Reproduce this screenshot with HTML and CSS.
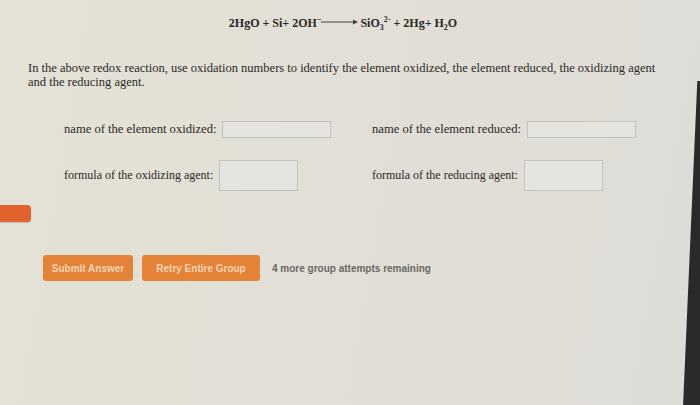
FILE: index.html
```html
<!DOCTYPE html>
<html>
<head>
<meta charset="utf-8">
<link rel="stylesheet" href="styles.css">
</head>
<body>
<div class="page">
  <div class="equation"><span class="eq">2HgO + Si+ 2OH<sup>&minus;</sup><svg class="arrow" width="38" height="8" viewBox="0 0 38 8"><line x1="0" y1="4" x2="35" y2="4" stroke="#444" stroke-width="1"/><path d="M32 1.5 L37 4 L32 6.5 Z" fill="#444"/></svg>SiO<sub>3</sub><sup>2-</sup> + 2Hg+ H<sub>2</sub>O</span></div>
  <p class="intro">In the above redox reaction, use oxidation numbers to identify the element oxidized, the element reduced, the oxidizing agent and the reducing agent.</p>
  <div class="grid">
    <div class="field"><span class="label">name of the element oxidized:</span><span class="box wide"></span></div>
    <div class="field"><span class="label">name of the element reduced:</span><span class="box wide"></span></div>
    <div class="field tall"><span class="label">formula of the oxidizing agent:</span><span class="box square"></span></div>
    <div class="field tall"><span class="label">formula of the reducing agent:</span><span class="box square"></span></div>
  </div>
  <div class="tab"></div>
  <div class="actions">
    <button class="btn submit">Submit Answer</button>
    <button class="btn retry">Retry Entire Group</button>
    <span class="remaining">4 more group attempts remaining</span>
  </div>
  <div class="edge"></div>
</div>
</body>
</html>
```
FILE: styles.css
```css
html, body {
  margin: 0;
  padding: 0;
}
body {
  width: 700px;
  height: 405px;
  overflow: hidden;
  background: linear-gradient(100deg, #e4e1d6 0%, #e2dfd6 45%, #dedcd7 100%);
  font-family: "Liberation Serif", "Times New Roman", serif;
  color: #2b2a28;
}
.page {
  position: relative;
  height: 405px;
  padding-top: 15px;
  box-sizing: border-box;
}
.equation {
  text-align: center;
  font-weight: bold;
  font-size: 12px;
  line-height: 16px;
  padding-right: 14px;
}
.eq {
  display: inline-block;
  white-space: nowrap;
}
.equation sup {
  font-size: 8px;
  vertical-align: 5px;
  line-height: 0;
}
.equation sub {
  font-size: 8px;
  vertical-align: -3px;
  line-height: 0;
}
.arrow {
  vertical-align: 1px;
  margin-right: 1px;
}
.intro {
  margin: 30px 0 0 28px;
  width: 640px;
  font-size: 12.5px;
  line-height: 14px;
}
.grid {
  display: grid;
  grid-template-columns: 308px 300px;
  margin: 31px 0 0 64px;
  row-gap: 21px;
}
.field {
  display: flex;
  align-items: center;
  height: 18px;
  font-size: 12.6px;
}
.field.tall {
  height: 32px;
  font-size: 12px;
}
.label {
  margin-right: 6px;
}
.box {
  display: block;
  background: #e6e4de;
  border: 1px solid #c4c2bc;
  box-sizing: border-box;
}
.box.wide {
  width: 109px;
  height: 17px;
}
.box.square {
  width: 79px;
  height: 31px;
}
.tab {
  margin-top: 14px;
  width: 31px;
  height: 17px;
  background: #e1622d;
  border-radius: 0 4px 4px 0;
  box-shadow: 0 1px 1px rgba(0,0,0,0.15);
}
.actions {
  display: flex;
  align-items: center;
  margin: 33px 0 0 43px;
  gap: 9px;
}
.btn {
  height: 26px;
  border: none;
  border-radius: 3px;
  background: #e48338;
  color: #f5d3b3;
  font-family: "Liberation Sans", Arial, sans-serif;
  font-weight: bold;
  font-size: 10px;
  padding: 0;
}
.btn.submit {
  width: 90px;
}
.btn.retry {
  width: 118px;
}
.remaining {
  margin-left: 3px;
  font-family: "Liberation Sans", Arial, sans-serif;
  font-weight: bold;
  font-size: 10px;
  color: #6a6864;
}
.edge {
  position: absolute;
  top: 0;
  right: 0;
  width: 18px;
  height: 405px;
  background: #2a2a2c;
  clip-path: polygon(100% 20%, 100% 100%, 6% 100%, 85% 20%);
}
```
